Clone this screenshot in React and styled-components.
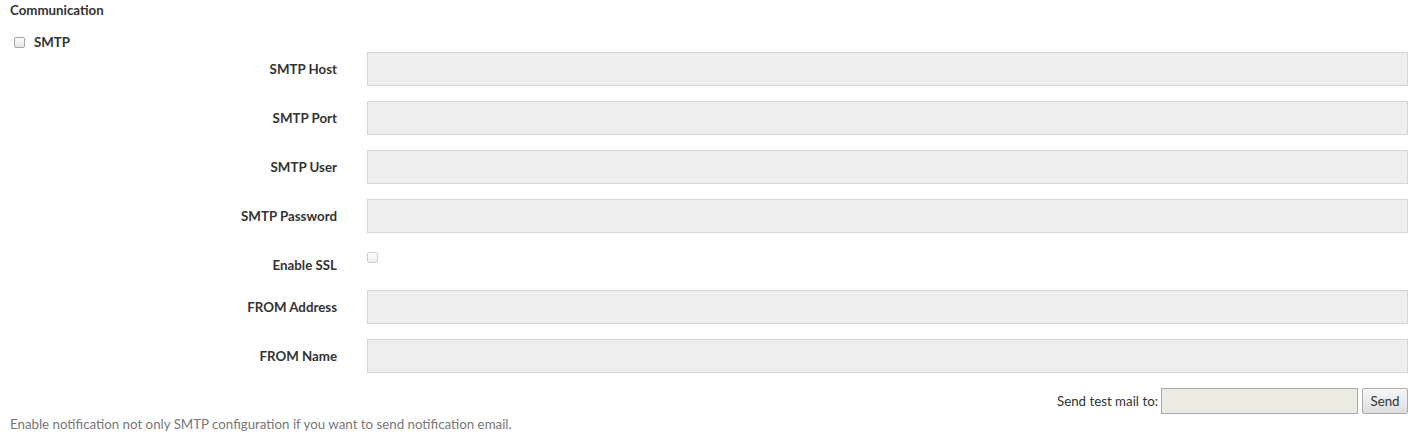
import React from 'react';
import styled, { createGlobalStyle } from 'styled-components';

const GlobalStyle = createGlobalStyle`
  html, body {
    margin: 0;
    padding: 0;
    background: #ffffff;
  }
  body {
    font-family: 'Lato', 'Open Sans', 'Liberation Sans', sans-serif;
    font-size: 13.3px;
    color: #333333;
  }
`;

const Page = styled.div`
  padding: 1px 9px 0 10px;
`;

const Title = styled.div`
  font-weight: bold;
  line-height: 18px;
`;

const CheckRow = styled.label`
  display: flex;
  align-items: center;
  gap: 9px;
  margin-top: 14px;
  padding-left: 4px;
  font-weight: bold;
  line-height: 18px;
`;

const Box = styled.span`
  display: block;
  width: 11px;
  height: 11px;
  box-sizing: border-box;
  border: 1px solid #a6a6a6;
  border-radius: 2px;
  background: linear-gradient(#fdfdfd, #e4e4e4);
  opacity: ${p => (p.$dim ? 0.55 : 1)};
`;

const Form = styled.div`
  display: grid;
  grid-template-columns: 327px 1fr;
  column-gap: 30px;
  row-gap: 15px;
  margin-top: 1px;
`;

const Label = styled.div`
  text-align: right;
  font-weight: bold;
  padding-top: 8px;
  line-height: 18px;
`;

const Field = styled.div`
  height: 34px;
  box-sizing: border-box;
  background: #eeeeee;
  border: 1px solid #d4d4dc;
`;

const SslCell = styled.div`
  height: 27px;
  padding-top: 4px;
  box-sizing: border-box;
`;

const TestRow = styled.div`
  display: flex;
  justify-content: flex-end;
  align-items: center;
  gap: 3px;
  margin-top: 15px;
  color: #333;
`;

const TestInput = styled.div`
  width: 197px;
  height: 26px;
  box-sizing: border-box;
  background: #ebebe4;
  border: 1px solid #a9a9a9;
`;

const SendButton = styled.div`
  width: 46px;
  height: 26px;
  margin-left: 1px;
  box-sizing: border-box;
  border: 1px solid #ababab;
  border-radius: 2px;
  background: linear-gradient(#f6f6f6, #dedede);
  display: flex;
  align-items: center;
  justify-content: center;
  color: #333;
`;

const Note = styled.div`
  color: #777777;
  line-height: 18px;
  margin-top: 1px;
`;

const fields = [
  'SMTP Host',
  'SMTP Port',
  'SMTP User',
  'SMTP Password',
  'Enable SSL',
  'FROM Address',
  'FROM Name',
];

export default function App() {
  return (
    <Page>
      <GlobalStyle />
      <Title>Communication</Title>
      <CheckRow>
        <Box />
        SMTP
      </CheckRow>
      <Form>
        {fields.map(f => (
          <React.Fragment key={f}>
            <Label>{f}</Label>
            {f === 'Enable SSL' ? (
              <SslCell>
                <Box $dim />
              </SslCell>
            ) : (
              <Field />
            )}
          </React.Fragment>
        ))}
      </Form>
      <TestRow>
        Send test mail to:
        <TestInput />
        <SendButton>Send</SendButton>
      </TestRow>
      <Note>Enable notification not only SMTP configuration if you want to send notification email.</Note>
    </Page>
  );
}
